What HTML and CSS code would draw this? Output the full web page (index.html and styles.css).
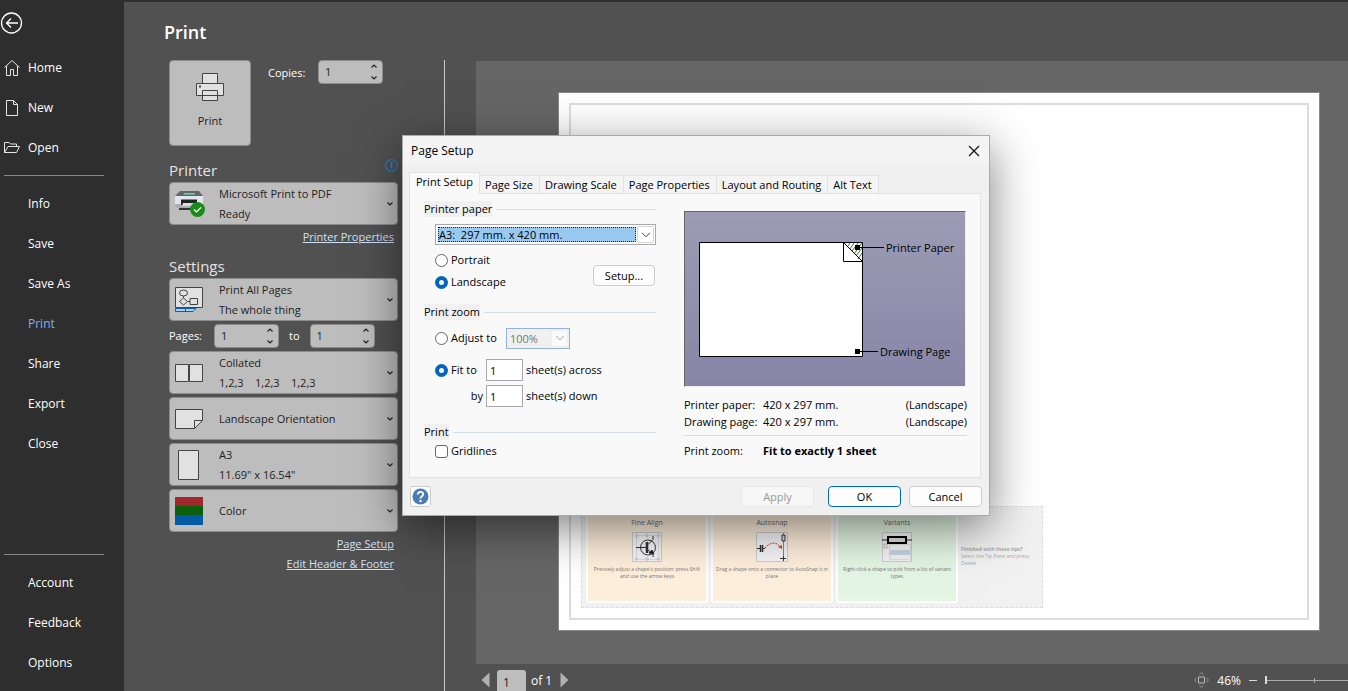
FILE: index.html
```html
<!DOCTYPE html>
<html lang="en">
<head>
  <meta charset="UTF-8">
  <meta name="viewport" content="width=device-width, initial-scale=1.0">
  <title>Print</title>
  <link rel="stylesheet" href="styles.css">
</head>
<body>
  <!-- shared chevrons -->
  <svg class="symbols" aria-hidden="true">
    <symbol id="chev-down" viewBox="0 0 8 6"><path d="M1.5 1.5 4 4l2.5-2.5" fill="none" stroke="currentColor" stroke-width="1.2"/></symbol>
    <symbol id="chev-up" viewBox="0 0 8 6"><path d="M1.5 4.5 4 2l2.5 2.5" fill="none" stroke="currentColor" stroke-width="1.2"/></symbol>
    <symbol id="chev-wide" viewBox="0 0 10 6"><path d="M1 .8 5 4.8 9 .8" fill="none" stroke="currentColor"/></symbol>
  </svg>

  <div class="app">
    <nav class="sidebar">
      <button class="back" aria-label="Back">
        <svg width="24" height="24" viewBox="0 0 24 24" fill="none" stroke="#fff" stroke-width="1.3"><circle cx="11.5" cy="12" r="10"/><path d="M18 12H6.5M11 7.5 6.5 12l4.5 4.5"/></svg>
      </button>
      <a class="nav-item" href="#home">
        <svg width="16" height="18" viewBox="0 0 16 18" fill="none" stroke="#e6e6e6"><path d="M.5 8.5 8 1.5l7.5 7M2.5 7v9.5h4v-6h3v6h4V7"/></svg>
        Home
      </a>
      <a class="nav-item" href="#new">
        <svg width="16" height="18" viewBox="0 0 16 18" fill="none" stroke="#e6e6e6"><path d="M2.500 1.500H9.500L13.500 5.500V16.500H2.500ZM9.500 1.500V5.500H13.500"/></svg>
        New
      </a>
      <a class="nav-item" href="#open">
        <svg width="16" height="18" viewBox="0 0 16 18" fill="none" stroke="#e6e6e6"><path d="M.5 13.500V3.500H5L6.500 5H12.500V7.500M.5 13.500H12.500L15.500 7.500H4L.5 13.500"/></svg>
        Open
      </a>
      <hr>
      <a class="nav-item" href="#info">Info</a>
      <a class="nav-item" href="#save">Save</a>
      <a class="nav-item" href="#save-as">Save As</a>
      <a class="nav-item active" href="#print">Print</a>
      <a class="nav-item" href="#share">Share</a>
      <a class="nav-item" href="#export">Export</a>
      <a class="nav-item" href="#close">Close</a>
      <div class="nav-bottom">
        <hr>
        <a class="nav-item" href="#account">Account</a>
        <a class="nav-item" href="#feedback">Feedback</a>
        <a class="nav-item" href="#options">Options</a>
      </div>
    </nav>

    <main class="main">
      <h1>Print</h1>
      <div class="columns">
        <section class="settings">
          <div class="print-row">
            <button class="print-button">
              <svg width="28" height="28" viewBox="0 0 28 28" fill="#e1e1e1" stroke="#444"><path d="M6.500 .5H21.500V10.500H6.500ZM.5 10.500H27.500V22.500H.5ZM6.500 17.500H21.500V27.500H6.500Z"/><path d="M3 12.500h2v2H3z" fill="#444" stroke="none"/></svg>
              Print
            </button>
            <label for="copies">Copies:</label>
            <div class="spin">
              <input id="copies" type="text" inputmode="numeric" value="1">
              <div class="spin-arrows">
                <button aria-label="More copies"><svg><use href="#chev-up"/></svg></button>
                <button aria-label="Fewer copies"><svg><use href="#chev-down"/></svg></button>
              </div>
            </div>
          </div>

          <div class="heading">
            <h2>Printer</h2>
            <svg width="13" height="13" viewBox="0 0 13 13" fill="none" stroke="#2f86d6"><circle cx="6.500" cy="6.500" r="5.800"/><path d="M6.500 3.500v6" stroke-width="1.600"/></svg>
          </div>
          <button class="option">
            <svg width="30" height="28" viewBox="0 0 30 28">
              <path d="M5 1H24L28 6H0Z" fill="#666"/><path d="M9 3h11v1.500H8.500z" fill="#4fe0b8"/>
              <path d="M0 6H28V16.500L26 18.500H2L0 16.500Z" fill="#e3e6ee"/><path d="M0 14h28v2.500l-2 2H2l-2-2z" fill="#a9adb6"/>
              <path d="M6 9.500H22V15H6Z" fill="#222"/><path d="M8 13h12l1 3H7z" fill="#ddd"/><path d="M4 18h20v2H4z" fill="#333"/>
              <circle cx="22.500" cy="19.500" r="7.500" fill="#1c8a1a"/><path d="M19 19.500l2.500 2.500 4.500-4.500" fill="none" stroke="#fff" stroke-width="1.200"/>
            </svg>
            <span>Microsoft Print to PDF<br>Ready</span>
            <svg class="chev"><use href="#chev-down"/></svg>
          </button>
          <a class="link" href="#printer-properties">Printer Properties</a>

          <div class="heading"><h2>Settings</h2></div>
          <button class="option">
            <svg width="30" height="28" viewBox="0 0 30 28" fill="#e1e1e1" stroke="#444">
              <path d="M.5 1.500H27.500V21.500H.5Z"/><ellipse cx="8.500" cy="7" rx="4" ry="3"/><path d="M8.500 10v2M8.500 12l4 3.500-4 3.500-4-3.500zM12.500 15.500H15M15 12.500h7.500v6H15z"/>
              <path d="M.5 22.500H21L18 25.500H.5ZM10.500 22.500v3" fill="#a8d0f0" stroke="#0f5ea8"/>
            </svg>
            <span>Print All Pages<br>The whole thing</span>
            <svg class="chev"><use href="#chev-down"/></svg>
          </button>
          <div class="pages-row">
            <label for="page-from">Pages:</label>
            <div class="spin">
              <input id="page-from" type="text" inputmode="numeric" value="1">
              <div class="spin-arrows">
                <button aria-label="Next first page"><svg><use href="#chev-up"/></svg></button>
                <button aria-label="Previous first page"><svg><use href="#chev-down"/></svg></button>
              </div>
            </div>
            <label for="page-to">to</label>
            <div class="spin">
              <input id="page-to" type="text" inputmode="numeric" value="1">
              <div class="spin-arrows">
                <button aria-label="Next last page"><svg><use href="#chev-up"/></svg></button>
                <button aria-label="Previous last page"><svg><use href="#chev-down"/></svg></button>
              </div>
            </div>
          </div>
          <div class="option-list">
            <button class="option">
              <svg width="30" height="28" viewBox="0 0 30 28" fill="#e1e1e1" stroke="#444"><path d="M.5 5.500H13.500V22.500H.5ZM14.500 5.500H27.500V22.500H14.500Z"/></svg>
              <span>Collated<br>1,2,3 &nbsp;&nbsp; 1,2,3 &nbsp;&nbsp; 1,2,3</span>
              <svg class="chev"><use href="#chev-down"/></svg>
            </button>
            <button class="option">
              <svg width="30" height="28" viewBox="0 0 30 28" fill="#e1e1e1" stroke="#444"><path d="M.5 4.500H27.500V15.500L19.500 23.500H.5ZM19.500 23.500V15.500H27.500"/></svg>
              <span>Landscape Orientation</span>
              <svg class="chev"><use href="#chev-down"/></svg>
            </button>
            <button class="option">
              <svg width="30" height="30" viewBox="0 0 30 30" fill="#e1e1e1" stroke="#444"><path d="M3.500 .5H23.500V29.500H3.500Z"/></svg>
              <span>A3<br>11.69" x 16.54"</span>
              <svg class="chev"><use href="#chev-down"/></svg>
            </button>
            <button class="option">
              <svg width="30" height="28" viewBox="0 0 30 28"><path d="M0 0h28v9H0z" fill="#a0282b"/><path d="M0 9h28v9H0z" fill="#0b5f0b"/><path d="M0 18h28v10H0z" fill="#005ba3"/></svg>
              <span>Color</span>
              <svg class="chev"><use href="#chev-down"/></svg>
            </button>
          </div>
          <a class="link" href="#page-setup">Page Setup</a>
          <a class="link" href="#header-footer">Edit Header &amp; Footer</a>
        </section>

        <section class="preview">
          <div class="canvas">
            <div class="paper">
              <div class="page-frame">
                <div class="tips">
                  <div class="tip">
                    <h4>Fine Align</h4>
                    <svg width="30" height="30" viewBox="0 0 30 30" fill="none" stroke="#333"><path d="M.5 .5h29v29H.5z" fill="#f5f5f8" stroke="#ccc"/><path d="M4.500 3.500h22v24h-22z" stroke="#ddd"/><g fill="#ddd" stroke="#bbb" stroke-width=".6"><circle cx="4.500" cy="3.500" r="1.300"/><circle cx="15" cy="3.500" r="1.300"/><circle cx="26.500" cy="3.500" r="1.300"/><circle cx="4.500" cy="27" r="1.300"/><circle cx="15" cy="27" r="1.300"/><circle cx="26.500" cy="27" r="1.300"/></g><circle cx="16" cy="15.500" r="7.500"/><path d="M4 15.500h11M16 12.500l5-5V4M16 18l5 3.500V25"/><path d="M15 10v11" stroke-width="2.500"/><path d="m17 21 5 1-2-4z" fill="#111"/></svg>
                    <p>Precisely adjust a shape's position: press Shift and use the arrow keys</p>
                  </div>
                  <div class="tip">
                    <h4>Autosnap</h4>
                    <svg width="32" height="30" viewBox="0 0 32 30" fill="none" stroke="#333"><path d="M.5 .5h31v29H.5z" fill="#f5f5f8" stroke="#ccc"/><path d="M27.500 1v26" stroke="#888"/><path d="M26 3h3v6h-3z" fill="#ddd"/><path d="M1 16.500h3M6 16.500h3M24 26.500h6M27.500 24v5"/><path d="M4.500 13v7M6.500 13v7" stroke-width="1.500"/><path d="M9 16C13 11 20 8 25 16" stroke="#d8451b" stroke-dasharray="2 1"/><path d="m22 15 4 2v-4z" fill="#d8451b" stroke="none"/></svg>
                    <p>Drag a shape onto a connector to AutoSnap it in place</p>
                  </div>
                  <div class="tip green">
                    <h4>Variants</h4>
                    <svg width="30" height="30" viewBox="0 0 30 30" fill="none"><path d="M.5 .5h29v29H.5z" fill="#f3f3f5" stroke="#ccc"/><path d="M7.500 12.500h21v15h-21z" fill="#f3f3f3" stroke="#ddd"/><path d="M8 18h20v5H8z" fill="#c5d3e4"/><path d="M0 8h30" stroke="#222"/><path d="M6 5h18v6H6z" fill="#ddd" stroke="#000" stroke-width="2"/><path d="M2 12h3v4H2z" stroke="#bbb"/></svg>
                    <p>Right-click a shape to pick from a list of variant types</p>
                  </div>
                  <div class="tip-end"><strong>Finished with these tips?</strong><br>Select the Tip Pane and press Delete</div>
                </div>
              </div>
            </div>
          </div>
          <div class="status-bar">
            <button aria-label="Previous page"><svg width="9" height="16" viewBox="0 0 9 16"><path d="M8.500 .5v15L.5 8z" fill="#b0b0b0"/></svg></button>
            <input id="page-number" type="text" aria-label="Page number" value="1">
            <label for="page-number">of 1</label>
            <button aria-label="Next page"><svg width="9" height="16" viewBox="0 0 9 16"><path d="M.5 .5v15l8-7.500z" fill="#b0b0b0"/></svg></button>
            <div class="zoom">
              <svg width="15" height="16" viewBox="0 0 15 16" fill="none" stroke="#999"><path d="M4.500 5h6v6h-6z" stroke="#bbb"/><path d="M5.500 2.500l2-2 2 2M5.500 13.500l2 2 2-2M2.500 6l-2 2 2 2M12.500 6l2 2-2 2"/></svg>
              <span>46%</span>
              <button aria-label="Zoom out"><svg width="8" height="16"><path d="M0 7.500h8" stroke="#ddd"/></svg></button>
              <input type="range" min="0" max="100" value="0" aria-label="Zoom">
            </div>
          </div>
        </section>
      </div>
    </main>
  </div>

  <div class="dialog" role="dialog" aria-labelledby="dialog-title">
    <div class="dialog-title">
      <h2 id="dialog-title">Page Setup</h2>
      <button aria-label="Close"><svg width="12" height="12" viewBox="0 0 12 12" stroke="#111" stroke-width="1.200"><path d="m1 1 10 10M11 1 1 11"/></svg></button>
    </div>
    <div class="tabs" role="tablist">
      <button class="tab active" role="tab" aria-selected="true">Print Setup</button>
      <button class="tab" role="tab">Page Size</button>
      <button class="tab" role="tab">Drawing Scale</button>
      <button class="tab" role="tab">Page Properties</button>
      <button class="tab" role="tab">Layout and Routing</button>
      <button class="tab" role="tab">Alt Text</button>
    </div>
    <div class="tab-panel" role="tabpanel">
      <div class="setup">
        <h3><span>Printer paper</span></h3>
        <div class="group paper-group">
          <div class="combo">
            <select aria-label="Printer paper"><option>A3:&nbsp; 297 mm. x 420 mm.</option></select>
            <span class="combo-arrow"><svg width="10" height="6"><use href="#chev-wide"/></svg></span>
          </div>
          <div class="orientation">
            <div>
              <label class="choice"><input type="radio" name="orientation">Portrait</label>
              <label class="choice"><input type="radio" name="orientation" checked>Landscape</label>
            </div>
            <button class="dlg-button small">Setup...</button>
          </div>
        </div>
        <h3><span>Print zoom</span></h3>
        <div class="group zoom-group">
          <div class="zoom-row adjust">
            <label class="choice"><input type="radio" name="zoom">Adjust to</label>
            <div class="combo disabled">
              <select aria-label="Adjust to percentage" disabled><option>100%</option></select>
              <span class="combo-arrow"><svg width="10" height="6"><use href="#chev-wide"/></svg></span>
            </div>
          </div>
          <div class="zoom-row">
            <label class="choice"><input type="radio" name="zoom" checked>Fit to</label>
            <input class="sheets" id="across" type="text" value="1">
            <label for="across">sheet(s) across</label>
          </div>
          <div class="zoom-row">
            <label class="by" for="down">by</label>
            <input class="sheets" id="down" type="text" value="1">
            <label for="down">sheet(s) down</label>
          </div>
        </div>
        <h3><span>Print</span></h3>
        <div class="group">
          <label class="choice"><input type="checkbox">Gridlines</label>
        </div>
      </div>

      <div class="summary">
        <svg class="diagram" viewBox="0 0 280 174" role="img" aria-label="Printer paper and drawing page">
          <path d="M14.500 30.500H177.500V144.500H14.500Z" fill="#fff" stroke="#000"/>
          <path d="M158.500 30.500V49.500H177.500" fill="none" stroke="#000"/>
          <path d="M159 31h18v18z" fill="#fff"/>
          <path d="M165 31l-2 3M169 31l-4 6M173 31l-6 8M177 31l-8 11M177 36l-6 8M177 41l-4 6" stroke="#3a7d3a"/>
          <path d="m158.500 30.500 19 19" stroke="#000"/>
          <path d="M170 33h5v5h-5zM170 137h5v5h-5z"/>
          <path d="M175 35.500h24M175 139.500h18" stroke="#000"/>
          <text x="201" y="40">Printer Paper</text>
          <text x="195" y="144">Drawing Page</text>
        </svg>
        <dl>
          <dt>Printer paper:</dt><dd>420 x 297 mm.</dd><dd>(Landscape)</dd>
          <dt>Drawing page:</dt><dd>420 x 297 mm.</dd><dd>(Landscape)</dd>
        </dl>
        <dl class="total">
          <dt>Print zoom:</dt><dd><strong>Fit to exactly 1 sheet</strong></dd>
        </dl>
      </div>
    </div>
    <div class="dialog-footer">
      <button class="help" aria-label="Help"><svg width="17" height="17" viewBox="0 0 17 17"><circle cx="8.500" cy="8.500" r="8" fill="#4a7db5"/><path d="M5.800 6.500C5.800 3 11.200 3 11.200 6.300 11.200 8.300 8.500 8.300 8.500 10.500" fill="none" stroke="#fff" stroke-width="1.800"/><circle cx="8.500" cy="13" r="1.200" fill="#fff"/></svg></button>
      <button class="dlg-button" disabled>Apply</button>
      <button class="dlg-button default">OK</button>
      <button class="dlg-button">Cancel</button>
    </div>
  </div>
</body>
</html>
```
FILE: styles.css
```css
* {
  box-sizing: border-box;
}

body {
  margin: 0;
  background: #2e2e2e;
  color: #fff;
  font-family: "Open Sans", "Noto Sans", sans-serif;
  font-size: 12px;
  line-height: 20px;
}

button, input, select {
  font: inherit;
  color: inherit;
  margin: 0;
  padding: 0;
  border: none;
  background: none;
}

h1, h2, h3, h4, p, dl, dd {
  margin: 0;
}

svg {
  display: block;
  flex-shrink: 0;
}

.symbols {
  position: absolute;
  width: 0;
  height: 0;
}

.app {
  display: flex;
  height: 100vh;
  padding-top: 2px;
  overflow: hidden;
}

/* Sidebar */
.sidebar {
  display: flex;
  flex-direction: column;
  width: 124px;
  padding-bottom: 8px;
  flex-shrink: 0;
}

.back {
  height: 46px;
  padding-bottom: 4px;
  text-align: left;
}

.nav-item {
  display: flex;
  align-items: center;
  gap: 8px;
  height: 40px;
  padding-left: 28px;
  color: #fff;
  text-decoration: none;
}

.nav-item:has(svg) {
  padding-left: 4px;
}

.nav-item.active {
  color: #7fb0f5;
}

.sidebar hr {
  width: 100px;
  height: 1px;
  margin: 7px 0 8px 4px;
  border: none;
  background: #888;
}

.nav-bottom {
  margin-top: auto;
}

/* Print settings */
.main {
  display: flex;
  flex-direction: column;
  flex: 1;
  min-width: 0;
  background: #515151;
}

h1 {
  padding: 18px 0 16px 40px;
  font-size: 18px;
  font-weight: 600;
  line-height: 24px;
}

.columns {
  display: flex;
  flex: 1;
  min-height: 0;
}

.settings {
  width: 321px;
  padding: 0 46px 0 45px;
  border-right: 1px solid #c8c8c8;
  flex-shrink: 0;
  font-size: 11px;
}

.print-row {
  display: flex;
  align-items: flex-start;
}

.print-row label {
  width: 67px;
  padding: 3px 0 0 17px;
}

.print-button {
  display: flex;
  flex-direction: column;
  align-items: center;
  gap: 10px;
  width: 82px;
  height: 86px;
  padding-top: 12px;
}

.print-button,
.option,
.spin {
  border: 1px solid #8c8c8c;
  border-radius: 4px;
  background: #bdbdbd;
  color: #222;
}

.spin {
  display: flex;
  width: 65px;
  height: 24px;
}

.spin input {
  width: 51px;
  padding-left: 6px;
}

.spin-arrows {
  display: flex;
  flex-direction: column;
  justify-content: space-between;
  padding: 2px 0;
}

.spin-arrows svg,
.chev {
  width: 8px;
  height: 6px;
}

.heading {
  display: flex;
  justify-content: space-between;
  margin: 13px 0 1px;
}

.link + .heading {
  margin-top: 10px;
}

.heading h2 {
  color: #e4e4e4;
  font-size: 15px;
  font-weight: 400;
  line-height: 22px;
}

.option {
  display: flex;
  align-items: center;
  width: 100%;
  height: 43px;
  padding: 0 3px 0 5px;
  text-align: left;
}

.option span {
  flex: 1;
  padding-left: 14px;
}

.link {
  display: block;
  width: fit-content;
  margin: 3px 4px 0 auto;
  color: #cfe0f8;
  line-height: 17px;
}

.pages-row {
  display: flex;
  align-items: center;
  gap: 10px;
  margin: 3px 0;
}

.pages-row label:first-child {
  width: 35px;
}

.pages-row label {
  white-space: nowrap;
}

.option-list {
  display: grid;
  gap: 3px;
}

/* Preview */
.preview {
  display: flex;
  flex-direction: column;
  flex: 1;
  min-width: 0;
  padding: 1px 0 0 31px;
}

.canvas {
  display: flex;
  flex: 1;
  padding: 31px 28px 33px 82px;
  background: #666;
}

.paper {
  display: flex;
  flex: 1;
  padding: 10px;
  border: 1px solid #888;
  background: #fff;
}

.page-frame {
  display: flex;
  flex: 1;
  align-items: flex-end;
  padding: 10px;
  border: 2px solid #dcdcdc;
}

.tips {
  display: grid;
  grid-template-columns: 122px 122px 122px 1fr;
  gap: 3px;
  width: 462px;
  height: 102px;
  padding: 4px;
  border: 1px dashed #ddd;
  background: #f1f1f1;
  color: #777;
  font-size: 5px;
  line-height: 7px;
}

.tip {
  display: flex;
  flex-direction: column;
  align-items: center;
  padding-top: 6px;
  border: 2px solid #fff;
  border-radius: 3px;
  background: #feefdc;
  text-align: center;
}

.tip.green {
  background: #e4f6e3;
}

.tip h4 {
  margin-bottom: 6px;
  color: #666;
  font-size: 7px;
  font-weight: 400;
}

.tip p {
  padding: 4px 3px 0;
}

.tip-end {
  padding-top: 35px;
  color: #aaa;
}

.status-bar {
  display: flex;
  align-items: flex-start;
  gap: 5px;
  height: 27px;
  padding: 8px 0 0 5px;
}

.status-bar > input {
  width: 29px;
  height: 24px;
  margin: -2px 0 0 2px;
  padding-left: 6px;
  border-radius: 3px;
  background: #bdbdbd;
  color: #222;
}

.status-bar label,
.zoom span {
  line-height: 18px;
}

.status-bar > button:last-of-type {
  margin-left: 3px;
}

.zoom {
  display: flex;
  gap: 8px;
  margin-left: auto;
}

.zoom input {
  appearance: none;
  width: 83px;
  height: 16px;
  background: linear-gradient(#aaa, #aaa) 0 8px / 100% 1px no-repeat,
    linear-gradient(#aaa, #aaa) 49px 50% / 1px 5px no-repeat;
}

.zoom input::-webkit-slider-thumb {
  appearance: none;
  width: 2px;
  height: 8px;
  background: #ddd;
}

/* Page Setup dialog */
.dialog {
  position: absolute;
  top: 135px;
  left: 402px;
  width: 588px;
  border: 1px solid #aaa;
  background: #f0f0f0;
  color: #000;
  box-shadow: 0 12px 44px rgba(0, 0, 0, 0.5);
  font-size: 11px;
  line-height: 16px;
}

.dialog-title {
  display: flex;
  align-items: center;
  justify-content: space-between;
  height: 29px;
  padding: 0 9px 0 8px;
  background: #f4f4f4;
}

.dialog-title h2 {
  font-size: 12px;
  font-weight: 400;
}

.tabs {
  display: flex;
  align-items: flex-end;
  height: 28px;
  padding-left: 6px;
}

.tab {
  height: 18px;
  padding: 0 6px 0 5px;
  border: 1px solid #e3e3e3;
  border-width: 1px 1px 0 0;
  background: #f4f4f4;
  white-space: nowrap;
}

.tab.active {
  height: 22px;
  margin-bottom: -1px;
  padding: 0 6px 3px;
  border-left-width: 1px;
  background: #f9f9f9;
  z-index: 1;
}

.tab-panel {
  display: flex;
  justify-content: space-between;
  margin: 0 8px 0 6px;
  height: 285px;
  padding: 7px 13px 0 14px;
  border: 1px solid #e3e3e3;
  background: #f9f9f9;
}

.setup {
  width: 232px;
}

.setup h3 {
  display: flex;
  align-items: center;
  gap: 4px;
  font-size: 11px;
  font-weight: 400;
}

.setup h3 span {
  background: #f0f0f0;
}

.setup h3::after {
  content: "";
  flex: 1;
  height: 1px;
  background: #d5dfe8;
}

.group {
  padding-left: 11px;
}

.paper-group {
  padding-top: 7px;
  margin-bottom: 11px;
}

.combo {
  display: flex;
  height: 21px;
  padding: 2px;
  border: 1px solid #a5a8ad;
  background: #fff;
}

.combo select {
  appearance: none;
  flex: 1;
  min-width: 0;
  height: 15px;
  padding-left: 1px;
  outline: 1px dotted #222;
  outline-offset: -1px;
  background: #99c9ef;
  line-height: 15px;
}

.combo-arrow {
  display: grid;
  place-items: center;
  width: 17px;
  height: 17px;
  margin: -1px -1px 0 1px;
  border: 1px solid #d5d5d5;
  border-radius: 2px;
  color: #444;
}

.combo.disabled {
  width: 64px;
  border: 1px solid #92b4d8;
  background: #f0f0f0;
  color: #777;
}

.combo.disabled select {
  outline: none;
  background: none;
  opacity: 1;
}

.combo.disabled .combo-arrow {
  background: #fafafa;
  border-color: #eee;
  color: #aaa;
}

.orientation {
  display: flex;
  align-items: flex-end;
  justify-content: space-between;
  margin-top: 4px;
}

.choice {
  display: flex;
  align-items: center;
  gap: 3px;
  height: 22px;
}

.choice input {
  appearance: none;
  width: 13px;
  height: 13px;
  border: 1px solid #666;
  background: #fff;
}

.choice input[type="radio"] {
  border-radius: 50%;
}

.choice input[type="checkbox"] {
  border-radius: 3px;
}

.choice input:checked {
  border: 4px solid #0066bf;
}

.zoom-group {
  padding-top: 7px;
  margin-bottom: 17px;
}

.zoom-row {
  display: flex;
  align-items: center;
  height: 22px;
  margin-bottom: 4px;
}

.zoom-row.adjust {
  margin-bottom: 10px;
}

.zoom-row > label:first-child {
  width: 51px;
  white-space: nowrap;
}

.zoom-row.adjust > label:first-child {
  width: 71px;
}

.zoom-row > .by {
  padding-right: 3px;
  text-align: right;
}

.sheets {
  width: 37px;
  height: 22px;
  margin-right: 3px;
  padding-left: 3px;
  border: 1px solid #a5a8ad;
  background: #fff;
}

.dlg-button {
  width: 73px;
  height: 21px;
  border: 1px solid #ccc;
  border-radius: 4px;
  background: #fdfdfd;
  line-height: 19px;
}

.dlg-button.small {
  width: 62px;
  margin: 0 1px 7px 0;
}

.dlg-button.default {
  margin: 0 8px 0 14px;
  border-color: #0067c0;
}

.dlg-button:disabled {
  border-color: #e8e8e8;
  background: #f7f7f7;
  color: #999;
}

.summary {
  width: 283px;
  padding-top: 10px;
}

.diagram {
  width: 282px;
  height: 176px;
  border: solid #eee;
  border-width: 1px;
  border-top-color: #666;
  border-left-color: #666;
  background: linear-gradient(#9c9cb5, #8785a6);
  font-size: 11px;
}

.summary dl {
  display: grid;
  grid-template-columns: 79px 1fr auto;
  padding-top: 9px;
  line-height: 17px;
  white-space: nowrap;
}

.summary .total {
  margin-top: 5px;
  padding-top: 6px;
  border-top: 1px solid #d5dfe8;
}

.dialog-footer {
  display: flex;
  padding: 8px 7px;
}

.help {
  display: grid;
  place-items: center;
  width: 21px;
  height: 21px;
  margin-right: auto;
  border: 1px solid #ccc;
  border-radius: 3px;
  background: #fff;
}
```
